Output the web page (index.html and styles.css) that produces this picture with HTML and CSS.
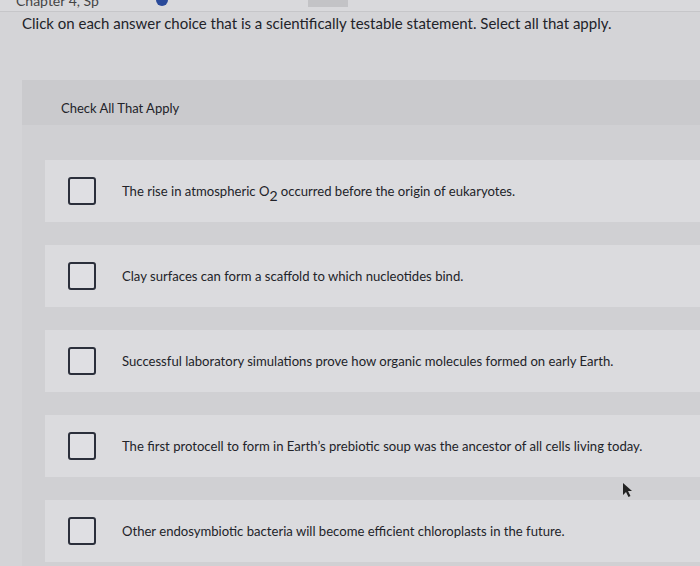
FILE: index.html
```html
<!DOCTYPE html>
<html lang="en">
<head>
<meta charset="utf-8">
<title>Check All That Apply</title>
<link rel="stylesheet" href="styles.css">
</head>
<body>
<div class="topbar">
  <div class="topbar-inner">
    <span class="crumb">Chapter 4, Sp</span>
    <span class="dot"></span>
    <span class="tab"></span>
  </div>
</div>
<p class="question">Click on each answer choice that is a scientifically testable statement. Select all that apply.</p>
<div class="panel">
  <div class="panel-head">Check All That Apply</div>
  <div class="options">
    <label class="option"><span class="box"></span><span class="text">The rise in atmospheric O<sub>2</sub> occurred before the origin of eukaryotes.</span></label>
    <label class="option"><span class="box"></span><span class="text">Clay surfaces can form a scaffold to which nucleotides bind.</span></label>
    <label class="option"><span class="box"></span><span class="text">Successful laboratory simulations prove how organic molecules formed on early Earth.</span></label>
    <label class="option"><span class="box"></span><span class="text">The first protocell to form in Earth’s prebiotic soup was the ancestor of all cells living today.</span></label>
    <label class="option option-cursor"><span class="box"></span><span class="text">Other endosymbiotic bacteria will become efficient chloroplasts in the future.</span>
      <svg class="cursor" width="12" height="16" viewBox="0 0 12 16"><path d="M1 1 L1 13 L4 10 L6.5 15 L8.5 14 L6 9 L10 9 Z" fill="#222" /></svg>
    </label>
  </div>
</div>
</body>
</html>
```
FILE: styles.css
```css
html, body {
  margin: 0;
  padding: 0;
}
body {
  width: 700px;
  height: 566px;
  overflow: hidden;
  background: #d4d4d7;
  font-family: Lato, "Open Sans", sans-serif;
  color: #222329;
}
.topbar {
  height: 11px;
  overflow: hidden;
  background: #d9d9dc;
  border-bottom: 1px solid #c6c6c9;
}
.topbar-inner {
  display: flex;
  align-items: center;
  gap: 40px;
  margin-top: -9px;
  padding-left: 16px;
  height: 18px;
}
.crumb {
  font-size: 14px;
  color: #444;
  width: 100px;
}
.dot {
  width: 12px;
  height: 12px;
  border-radius: 50%;
  background: #2a4a9a;
}
.tab {
  width: 40px;
  height: 14px;
  background: #c3c3c6;
  margin-left: 100px;
}
.question {
  margin: 0;
  padding: 1px 0 0 22px;
  font-size: 15px;
  line-height: 20px;
  height: 67px;
}
.panel {
  margin-left: 22px;
  background: #d0d0d3;
}
.panel-head {
  height: 45px;
  display: flex;
  align-items: center;
  padding: 10px 0 0 39px;
  box-sizing: border-box;
  font-size: 13px;
  background: #cacacd;
}
.options {
  display: flex;
  flex-direction: column;
  gap: 23px;
  padding: 35px 0 10px 23px;
}
.option {
  position: relative;
  height: 62px;
  display: flex;
  align-items: center;
  background: #dbdbde;
  padding-left: 23px;
}
.box {
  flex: none;
  width: 24px;
  height: 24px;
  border: 2px solid #2b2f3b;
  border-radius: 3px;
  background: #dfdfe3;
}
.text {
  margin-left: 26px;
  font-size: 13.1px;
}
.text sub {
  font-size: 14px;
  line-height: 0;
  vertical-align: -5px;
}
.cursor {
  position: absolute;
  left: 577px;
  top: -18px;
}
```
